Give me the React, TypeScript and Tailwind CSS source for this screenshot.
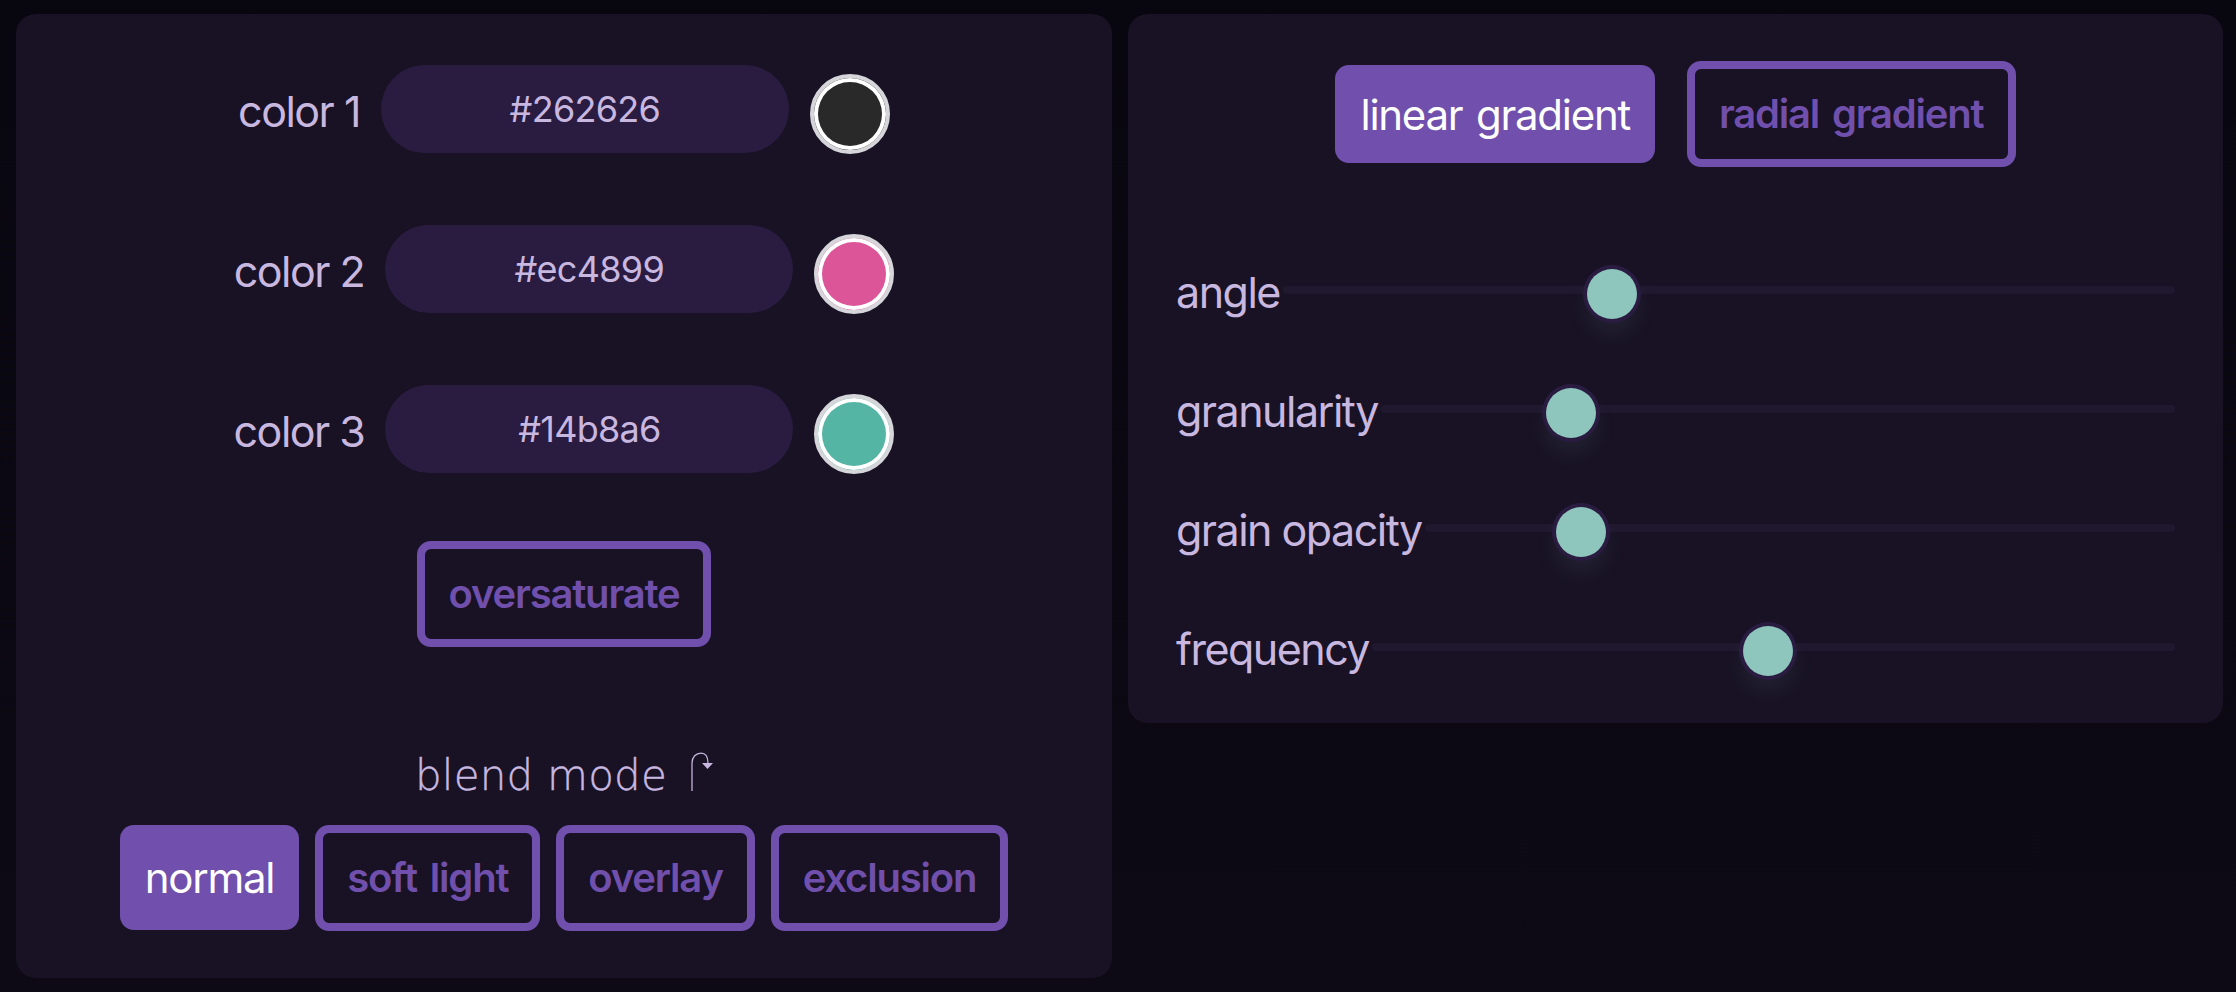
const colors = [
  { label: "color 1", hex: "#262626", swatch: "bg-[#292929]" },
  { label: "color 2", hex: "#ec4899", swatch: "bg-[#db5598]" },
  { label: "color 3", hex: "#14b8a6", swatch: "bg-[#55b5a5]" },
];

const sliders = [
  { label: "angle", percent: 36.1 },
  { label: "granularity", percent: 22.2 },
  { label: "grain opacity", percent: 18.8 },
  { label: "frequency", percent: 49.3 },
];

const blendModes = ["normal", "soft light", "overlay", "exclusion"];

function ModeButton({ label, active }: { label: string; active?: boolean }) {
  if (active) {
    return (
      <button
        className="rounded-[14px] bg-[#7050ac] px-[25px] text-[42px] tracking-[-0.03em] text-white [word-spacing:3px]"
        type="button"
      >
        {label}
      </button>
    );
  }

  return (
    <button
      className="h-[106px] rounded-[14px] border-[8px] border-[#7050ac] px-[24px] text-[40px] font-semibold tracking-[-0.03em] text-[#7050ac] [word-spacing:4px]"
      type="button"
    >
      {label}
    </button>
  );
}

function ColorRow({ label, hex, swatch }: { label: string; hex: string; swatch: string }) {
  return (
    <div className="flex items-start justify-center">
      <span className="h-[88px] text-[43px] leading-[93px] tracking-[-0.035em] text-[#c8b8e0]">{label}</span>
      <div className="ml-[21px] flex h-[88px] w-[408px] items-center justify-center rounded-full bg-[#2a1c40] text-[36px] tracking-[-0.02em] text-[#c8b8e0]">
        {hex}
      </div>
      <div
        className={`ml-[21px] mt-[9px] size-20 rounded-full border-4 border-[#d6d6da] shadow-[inset_0_0_0_4px_#ffffff] ${swatch}`}
      />
    </div>
  );
}

function SliderRow({ label, percent }: { label: string; percent: number }) {
  return (
    <div className="flex h-[119px] items-center">
      <span className="pb-[3px] text-[43px] leading-none tracking-[-0.035em] text-[#c8b8e0]">{label}</span>
      <div className="relative mb-2 ml-[3px] h-2 flex-1 rounded-full bg-[#20182f]">
        <div
          className="absolute top-[-17px] size-[50px] -translate-x-1/2 rounded-full bg-[#8ec5bd] shadow-[0_0_0_4px_#2a1c40,0_14px_22px_rgba(142,197,189,0.1)]"
          style={{ left: `calc(25px + (100% - 50px) * ${percent / 100})` }}
        />
      </div>
    </div>
  );
}

export default function App() {
  return (
    <div className="flex h-[992px] items-start gap-4 bg-gradient-to-b from-[#08060f] to-[#0d0a15] pl-4 pr-[13px] pt-[14px] font-['Inter',sans-serif]">
      <section className="w-[1096px] rounded-[20px] bg-[#181224] pb-[48px] pt-[51px]">
        <div className="flex flex-col gap-[71px]">
          {colors.map((color) => (
            <ColorRow key={color.label} {...color} />
          ))}
        </div>

        <div className="mt-[67px] flex justify-center">
          <ModeButton label="oversaturate" />
        </div>

        <div className="mt-[104px] flex items-end justify-center gap-[24px] text-[#c8b8e0]">
          <span className="font-['DejaVu_Sans',sans-serif] text-[42px] font-extralight leading-[50px] tracking-[0.005em] [-webkit-text-stroke:0.4px_#c8b8e0]">
            blend mode
          </span>
          <svg className="mb-[9px]" fill="none" height="40" viewBox="0 0 22 40" width="22">
            <path d="M1 39V11C1 5 5 1 10 1C15 1 17 5 17 11" stroke="currentColor" strokeWidth="1.25" />
            <path d="M11 11H22L16.5 17Z" fill="currentColor" />
          </svg>
        </div>

        <div className="mt-[24px] flex h-[105px] justify-center gap-4">
          {blendModes.map((mode, index) => (
            <ModeButton active={index === 0} key={mode} label={mode} />
          ))}
        </div>
      </section>

      <section className="flex-1 rounded-[20px] bg-[#181224] px-12 pb-[13px] pt-[47px]">
        <div className="flex items-center justify-center gap-8">
          <div className="flex h-[98px]">
            <ModeButton active label="linear gradient" />
          </div>
          <ModeButton label="radial gradient" />
        </div>

        <div className="mt-[67px]">
          {sliders.map((slider) => (
            <SliderRow key={slider.label} {...slider} />
          ))}
        </div>
      </section>
    </div>
  );
}
